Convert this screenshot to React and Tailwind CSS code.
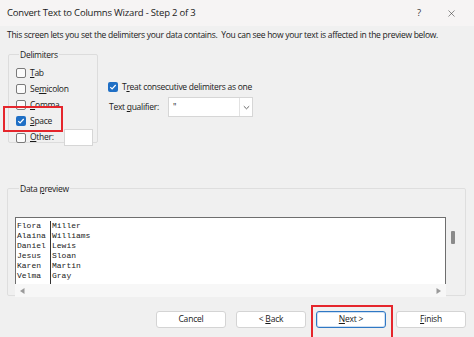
import { X } from 'lucide-react'

const UI_FONT = { fontFamily: '"Open Sans", "Noto Sans", sans-serif' }

function Box({ checked }) {
  return checked ? (
    <span className="w-[10px] h-[10px] rounded-[2px] bg-[#1f6fc5] flex items-center justify-center shrink-0">
      <svg width="8" height="8" viewBox="0 0 8 8">
        <path d="M1.3 4.2 L3.1 6 L6.7 2" fill="none" stroke="white" strokeWidth="1.2" />
      </svg>
    </span>
  ) : (
    <span className="w-[10px] h-[10px] rounded-[2px] border border-[#7a7a7a] bg-[#fbfbfb] shrink-0" />
  )
}

function Check({ checked, children }) {
  return (
    <div className="flex items-center gap-[4px] h-[16px]">
      <Box checked={checked} />
      <span className="text-[8.5px] tracking-[-0.28px] text-[#1a1a1a] leading-none">{children}</span>
    </div>
  )
}

const ROWS = [
  ['Flora', 'Miller'],
  ['Alaina', 'Williams'],
  ['Daniel', 'Lewis'],
  ['Jesus', 'Sloan'],
  ['Karen', 'Martin'],
  ['Velma', 'Gray'],
]

function Btn({ children, focused }) {
  return (
    <button
      type="button"
      className={
        'w-[70px] h-[17px] rounded-[3px] bg-white text-[8.5px] tracking-[-0.2px] text-[#1a1a1a] flex items-center justify-center whitespace-pre ' +
        (focused ? 'border border-[#2f78c4] shadow-[inset_0_0_0_1px_#cfe0f3]' : 'border border-[#d4d4d4]')
      }
    >
      {children}
    </button>
  )
}

export default function App() {
  return (
    <div className="relative w-[474px] h-[337px] bg-[#f0f0f0] overflow-hidden" style={UI_FONT}>
      {/* Title bar */}
      <div className="h-[26px] bg-[#f6f4f4] flex items-center pl-[7px] pr-[17px]">
        <span className="text-[9.5px] tracking-[-0.2px] text-[#1a1a1a] flex-1">Convert Text to Columns Wizard - Step 2 of 3</span>
        <span className="text-[9.5px] text-[#333] mr-[25px]">?</span>
        <X size={11} strokeWidth={1.2} className="text-[#333]" />
      </div>

      <p className="mt-[3px] ml-[7px] text-[8.5px] tracking-[-0.28px] leading-[11px] text-[#1a1a1a] whitespace-nowrap">
        This screen lets you set the delimiters your data contains.&nbsp; You can see how your text is affected in the preview below.
      </p>

      <div className="flex mt-[9px]">
        {/* Delimiters group */}
        <fieldset className="ml-[8px] w-[90px] h-[94px] border border-[#dcdcdc] rounded-[2px] pl-[7px] pt-[5px]">
          <legend className="ml-[3px] px-[1px] text-[8.5px] tracking-[-0.28px] leading-[11px] text-[#1a1a1a]">Delimiters</legend>
          <Check><u>T</u>ab</Check>
          <Check>Se<u>m</u>icolon</Check>
          <Check><u>C</u>omma</Check>
          <Check checked><u>S</u>pace</Check>
          <div className="flex items-center">
            <Check><u>O</u>ther:</Check>
            <span className="ml-[10px] w-[29px] h-[17px] bg-white border border-[#d6d6d6]" />
          </div>
        </fieldset>

        {/* Options */}
        <div className="ml-[10px] pt-[30px]">
          <Check checked>T<u>r</u>eat consecutive delimiters as one</Check>
          <div className="flex items-center mt-[2px]">
            <span className="text-[8.5px] tracking-[-0.28px] text-[#1a1a1a] w-[59px] ml-[1px]">Text <u>q</u>ualifier:</span>
            <div className="w-[85px] h-[20px] bg-white border border-[#d6d6d6] flex items-center">
              <span className="flex-1 pl-[4px] text-[8.5px] text-[#1a1a1a] leading-none">"</span>
              <span className="w-[13px] h-full border-l border-[#e2e2e2] flex items-center justify-center">
                <svg width="7" height="5" viewBox="0 0 7 5">
                  <path d="M0.8 1.2 L3.5 3.8 L6.2 1.2" fill="none" stroke="#555" strokeWidth="0.9" />
                </svg>
              </span>
            </div>
          </div>
        </div>
      </div>

      {/* Data preview */}
      <fieldset className="mt-[40px] ml-[7px] w-[459px] h-[113px] border border-[#dedede] rounded-[2px] pl-[7px] pt-[23px]">
        <legend className="ml-[4px] px-[1px] text-[8.5px] tracking-[-0.28px] leading-[11px] text-[#1a1a1a]">
          Data <u>p</u>review
        </legend>
        <div className="flex">
          <div className="w-[431px]">
            <div className="h-[67px] bg-white border-t border-x border-[#6e6e6e] flex pt-[3px]" style={{ fontFamily: '"Liberation Mono", monospace' }}>
              <div className="w-[35px] border-r border-[#333] text-[8px] leading-[10px] text-[#222]">
                {ROWS.map(r => <div key={r[0]} className="pl-[1px]">{r[0]}</div>)}
              </div>
              <div className="text-[8px] leading-[10px] text-[#222]">
                {ROWS.map(r => <div key={r[1]} className="pl-[1px]">{r[1]}</div>)}
              </div>
            </div>
            <div className="h-[13px] bg-[#f7f7f7] flex items-center justify-between px-[5px]">
              <svg width="5" height="6" viewBox="0 0 5 6"><path d="M4.5 0 L0 3 L4.5 6 Z" fill="#9a9a9a" /></svg>
              <svg width="5" height="6" viewBox="0 0 5 6"><path d="M0.5 0 L5 3 L0.5 6 Z" fill="#9a9a9a" /></svg>
            </div>
          </div>
          <div className="w-[12px] pl-[5px] pt-[14px]">
            <div className="w-[4px] h-[13px] bg-[#8a8a8a] rounded-[1px]" />
          </div>
        </div>
      </fieldset>

      {/* Buttons */}
      <div className="flex justify-end gap-[10px] pr-[8px] mt-[15px]">
        <Btn>Cancel</Btn>
        <Btn>{'< '}<u>B</u>ack</Btn>
        <Btn focused><u>N</u>ext{' >'}</Btn>
        <Btn><u>F</u>inish</Btn>
      </div>

      {/* Red highlight annotations */}
      <div className="absolute left-[3px] top-[106px] w-[60px] h-[26px] border-2 border-[#e5262c]" />
      <div className="absolute left-[311px] top-[305px] w-[82px] h-[34px] border-2 border-[#e5262c]" />
    </div>
  )
}
